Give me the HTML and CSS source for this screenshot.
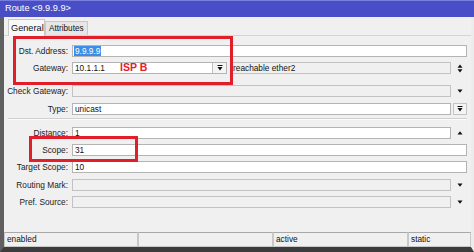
FILE: index.html
```html
<!DOCTYPE html>
<html>
<head>
<meta charset="utf-8">
<link rel="stylesheet" href="styles.css">
</head>
<body>
<div class="window">
  <div class="titlebar">Route &lt;9.9.9.9&gt;</div>
  <div class="frame">
    <div class="tabs">
      <div class="tab active">General</div>
      <div class="tab">Attributes</div>
    </div>
    <div class="panel">
      <div class="row r-dst">
        <div class="label">Dst. Address:</div>
        <div class="field"><span class="sel">9.9.9.9</span></div>
      </div>
      <div class="row r-gw">
        <div class="label">Gateway:</div>
        <div class="field gw">10.1.1.1<span class="isp">ISP B</span><span class="btn"><svg width="6" height="6" viewBox="0 0 6 6"><rect x="0.5" y="0" width="5" height="1" fill="#111"/><path d="M0.5 2 H5.5 L3 5.6 Z" fill="#111"/></svg></span></div>
        <div class="field ro">reachable ether2</div>
        <div class="arrow"><svg width="6" height="9" viewBox="0 0 6 9"><path d="M0.5 3.8 L3 0.5 L5.5 3.8 Z M0.5 5.2 H5.5 L3 8.5 Z" fill="#111"/></svg></div>
      </div>
      <div class="row r-check">
        <div class="label">Check Gateway:</div>
        <div class="field ro"></div>
        <div class="arrow"><svg width="6" height="4" viewBox="0 0 6 4"><path d="M0.5 0.5 H5.5 L3 3.8 Z" fill="#111"/></svg></div>
      </div>
      <div class="row r-type">
        <div class="label">Type:</div>
        <div class="field">unicast</div>
        <div class="arrow boxed"><svg width="6" height="6" viewBox="0 0 6 6"><rect x="0.5" y="0" width="5" height="1" fill="#111"/><path d="M0.5 2 H5.5 L3 5.6 Z" fill="#111"/></svg></div>
      </div>
      <div class="sep"></div>
      <div class="row r-dist">
        <div class="label">Distance:</div>
        <div class="field">1</div>
        <div class="arrow"><svg width="6" height="4" viewBox="0 0 6 4"><path d="M0.5 3.5 H5.5 L3 0.2 Z" fill="#111"/></svg></div>
      </div>
      <div class="row r-scope">
        <div class="label">Scope:</div>
        <div class="field">31</div>
      </div>
      <div class="row r-target">
        <div class="label">Target Scope:</div>
        <div class="field">10</div>
      </div>
      <div class="row r-mark">
        <div class="label">Routing Mark:</div>
        <div class="field ro"></div>
        <div class="arrow"><svg width="6" height="4" viewBox="0 0 6 4"><path d="M0.5 0.5 H5.5 L3 3.8 Z" fill="#111"/></svg></div>
      </div>
      <div class="row r-pref">
        <div class="label">Pref. Source:</div>
        <div class="field ro"></div>
        <div class="arrow"><svg width="6" height="4" viewBox="0 0 6 4"><path d="M0.5 0.5 H5.5 L3 3.8 Z" fill="#111"/></svg></div>
      </div>
      <div class="redbox box1"></div>
      <div class="redbox box2"></div>
    </div>
    <div class="status">
      <div class="seg s1">enabled</div>
      <div class="seg s2"></div>
      <div class="seg s3">active</div>
      <div class="seg s4">static</div>
    </div>
  </div>
</div>
</body>
</html>
```
FILE: styles.css
```css
* { box-sizing: border-box; }
html, body { margin: 0; padding: 0; }
body {
  width: 474px;
  height: 252px;
  overflow: hidden;
  font-family: "Liberation Sans", Arial, sans-serif;
  font-size: 8.3px;
  color: #111;
  background: #f0f0f0;
}
.window {
  width: 474px;
  height: 252px;
  display: flex;
  flex-direction: column;
}
.titlebar {
  height: 17px;
  background: #4a4ec6;
  border-top: 1px solid #7a7ee0;
  color: #fff;
  font-size: 9.2px;
  line-height: 15px;
  padding-left: 5px;
}
.frame {
  flex: 1;
  display: flex;
  flex-direction: column;
  border-left: 4px solid #5f5f5f;
  border-right: 3px solid #ececec;
  border-bottom: 5px solid #3c3c3c;
  background: #f0f0f0;
}
.tabs {
  height: 19px;
  display: flex;
  align-items: flex-end;
  padding-left: 4px;
  border-bottom: 1px solid #d4d4d4;
}
.tab {
  height: 14px;
  padding: 0 3px;
  line-height: 13px;
  border: 1px solid #c8c8c8;
  border-bottom: none;
  background: #e6e6e6;
  font-size: 8.2px;
}
.tab.active {
  height: 17px;
  width: 37px;
  background: #f7f7f7;
  font-size: 9.2px;
  line-height: 16px;
  padding-left: 2px;
  margin-bottom: -1px;
  position: relative;
}
.panel {
  position: relative;
  flex: 1;
  display: flex;
  flex-direction: column;
  padding: 9px 4px 0 0;
  background: #f0f0f0;
}
.row {
  height: 12px;
  display: flex;
  align-items: stretch;
}
.label {
  width: 65px;
  text-align: right;
  padding-right: 1px;
  line-height: 12px;
  color: #222;
}
.field {
  flex: 1;
  margin-left: 3px;
  background: #fff;
  border: 1px solid #b4b4b4;
  line-height: 10px;
  padding-left: 2px;
  white-space: nowrap;
  position: relative;
}
.field.ro {
  background: #f0f0f0;
  border-color: #c2c2c2;
}
.field.gw {
  flex: 0 0 155px;
  padding-right: 15px;
}
.r-gw .field.ro { margin-left: 4px; padding-left: 1px; }
.sel {
  background: #3a8ee6;
  color: #fff;
  padding: 0 1px;
  margin-left: -1px;
  display: inline-block;
  line-height: 10px;
}
.isp {
  position: absolute;
  left: 47px;
  top: -2px;
  color: #e2202c;
  font-weight: bold;
  font-size: 10.5px;
  line-height: 13px;
}
.btn {
  position: absolute;
  right: 0;
  top: 0;
  width: 14px;
  height: 10px;
  border-left: 1px solid #c0c0c0;
  background: #f4f4f4;
  display: flex;
  align-items: center;
  justify-content: center;
}
.arrow {
  width: 14px;
  margin-left: 2px;
  display: flex;
  align-items: center;
  justify-content: center;
}
.arrow.boxed {
  border: 1px solid #c4c4c4;
  background: #f4f4f4;
}
.r-dst { margin-top: 0; }
.r-gw { margin-top: 5px; }
.r-check { margin-top: 11px; }
.r-type { margin-top: 6px; }
.sep {
  background: #d0d0d0;
  border-bottom: 1px solid #fbfbfb;
  margin: 3px 0 0 4px;
  height: 2px;
}
.r-dist { margin-top: 7px; }
.r-scope { margin-top: 5px; }
.r-target { margin-top: 5px; }
.r-mark { margin-top: 6px; }
.r-pref { margin-top: 5px; }
.redbox {
  position: absolute;
  border: 3px solid #e01f2b;
}
.box1 { left: 9px; top: 0; width: 220px; height: 49px; }
.box2 { left: 25px; top: 100px; width: 109px; height: 26px; }
.status {
  height: 15px;
  display: flex;
  margin-top: auto;
}
.seg {
  border: 1px solid #c8c8c8;
  border-top-color: #a8a8a8;
  line-height: 12px;
  padding-left: 2px;
  background: #f0f0f0;
}
.s1 { width: 134px; }
.s2 { width: 135px; }
.s3 { width: 135px; }
.s4 { flex: 1; }
```
